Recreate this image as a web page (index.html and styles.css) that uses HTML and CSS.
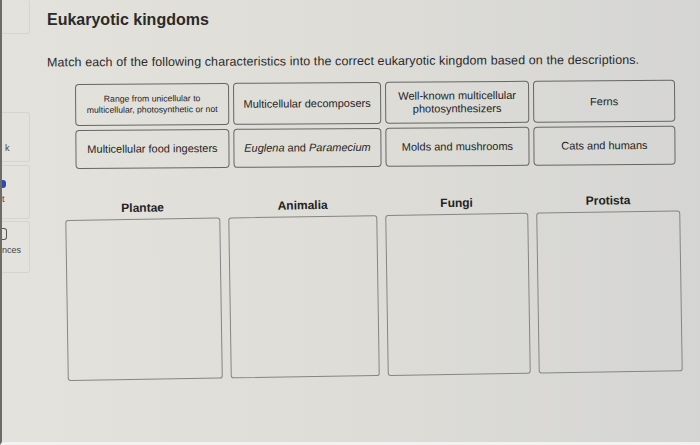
FILE: index.html
```html
<!DOCTYPE html>
<html lang="en">
<head>
    <meta charset="UTF-8">
    <title>Eukaryotic kingdoms</title>
    <link rel="stylesheet" href="styles.css">
</head>
<body>
    <div class="sidebar">
        <div class="side-item side-top"></div>
        <div class="side-item side-k">k</div>
        <div class="side-item side-t"><span class="side-dot"></span>t</div>
        <div class="side-item side-ref"><span class="side-icon"></span>nces</div>
    </div>
    <div class="main">
        <div class="title">Eukaryotic kingdoms</div>
        <div class="subtitle">Match each of the following characteristics into the correct eukaryotic kingdom based on the descriptions.</div>
        <div class="tiles">
            <div class="tile small">Range from unicellular to<br>multicellular, photosynthetic or not</div>
            <div class="tile">Multicellular decomposers</div>
            <div class="tile">Well-known multicellular<br>photosynthesizers</div>
            <div class="tile">Ferns</div>
            <div class="tile">Multicellular food ingesters</div>
            <div class="tile"><span><i>Euglena</i> and <i>Paramecium</i></span></div>
            <div class="tile">Molds and mushrooms</div>
            <div class="tile">Cats and humans</div>
        </div>
        <div class="kingdoms">
            <div class="kingdom">
                <div class="kingdom-name">Plantae</div>
                <div class="drop"></div>
            </div>
            <div class="kingdom">
                <div class="kingdom-name">Animalia</div>
                <div class="drop"></div>
            </div>
            <div class="kingdom">
                <div class="kingdom-name">Fungi</div>
                <div class="drop"></div>
            </div>
            <div class="kingdom">
                <div class="kingdom-name">Protista</div>
                <div class="drop"></div>
            </div>
        </div>
    </div>
</body>
</html>
```

FILE: styles.css
```css
body {
    font-family: "Liberation Sans", Arial, sans-serif;
    background: linear-gradient(to right, #e4e2dc, #dddcd7 55%, #d5d5d4);
    margin: 0;
    height: 445px;
    display: flex;
    overflow: hidden;
    color: #222;
    border-left: 2px solid #6c6b68;
    box-sizing: border-box;
    border-bottom: 3px solid #f2f2f0;
}
.sidebar {
    width: 28px;
    display: flex;
    flex-direction: column;
}
.side-item {
    border: 1px solid #d6d4ce;
    border-left: none;
    border-radius: 0 3px 3px 0;
    font-size: 9px;
    color: #444;
}
.side-top {
    height: 33px;
    border-top: none;
    margin-bottom: 78px;
}
.side-k {
    height: 50px;
    padding: 30px 0 0 3px;
    box-sizing: border-box;
    margin-bottom: 3px;
}
.side-t {
    height: 54px;
    padding-top: 14px;
    box-sizing: border-box;
    line-height: 8px;
    margin-bottom: 2px;
}
.side-dot {
    display: block;
    width: 4px;
    height: 8px;
    background: #2b4fa8;
    border-radius: 0 3px 3px 0;
    margin-bottom: 7px;
}
.side-ref {
    height: 52px;
    padding-top: 6px;
    box-sizing: border-box;
    line-height: 10px;
}
.side-icon {
    display: block;
    width: 4px;
    height: 10px;
    border: 1px solid #555;
    border-left: none;
    border-radius: 0 3px 3px 0;
    margin-bottom: 5px;
}
.main {
    flex: 1;
    padding: 11px 0 0 17px;
}
.title {
    font-size: 16px;
    font-weight: bold;
    color: #2a2a2a;
}
.subtitle {
    font-size: 12.5px;
    color: #2a2a2a;
    margin-top: 25px;
    letter-spacing: 0.1px;
    transform: rotate(-0.25deg);
}
.tiles {
    display: grid;
    grid-template-columns: 154px 148px 144px 142px;
    grid-template-rows: 42px 39px;
    gap: 4px;
    margin: 16px 0 0 28px;
    transform: rotate(-0.4deg);
    transform-origin: left top;
}
.tile {
    border: 1px solid #666664;
    border-radius: 4px;
    display: flex;
    align-items: center;
    justify-content: center;
    text-align: center;
    font-size: 11px;
    color: #1e1e1e;
    line-height: 13px;
}
.tile.small {
    font-size: 8.7px;
    line-height: 11px;
}
.kingdoms {
    display: grid;
    grid-template-columns: 155px 149px 143px 144px;
    gap: 8px;
    margin: 33px 0 0 18px;
    transform: rotate(-0.9deg);
    transform-origin: left top;
}
.kingdom-name {
    text-align: center;
    font-size: 12px;
    font-weight: bold;
    color: #222;
    height: 18px;
}
.drop {
    border: 1px solid #858583;
    border-radius: 3px;
    height: 159px;
}
```
